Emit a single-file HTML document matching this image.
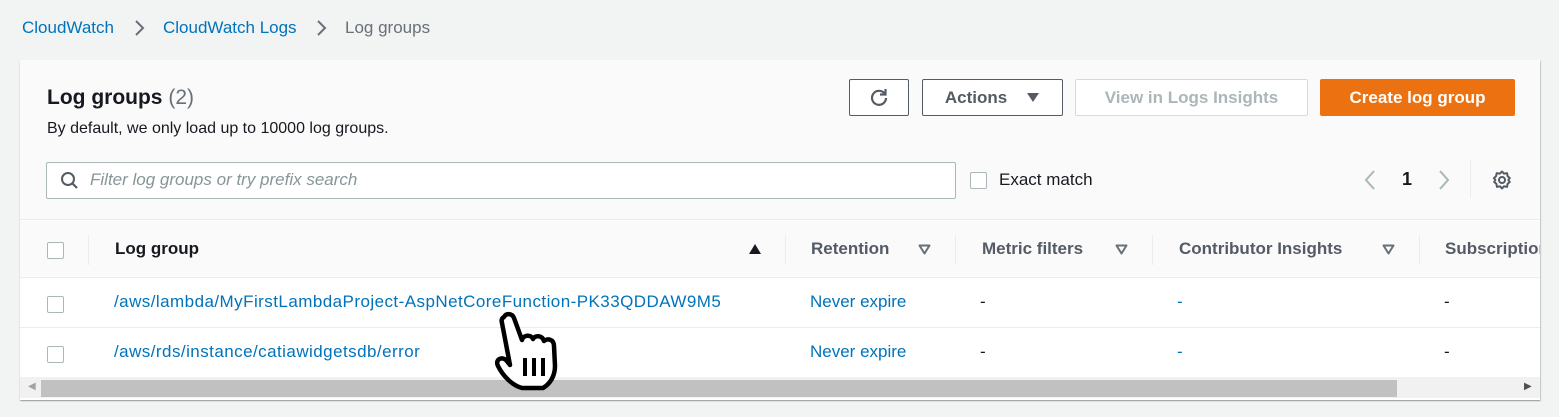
<!DOCTYPE html>
<html><head><meta charset="utf-8"><style>
*{box-sizing:border-box;margin:0;padding:0}
body{width:1559px;height:417px;background:#f2f3f3;font-family:"Liberation Sans",Arial,sans-serif;position:relative;overflow:hidden;color:#16191f}
.a{position:absolute;white-space:nowrap}
.link{color:#0073bb}
.cb{position:absolute;width:17px;height:17px;border:1px solid #aab7b8;border-radius:2px;background:#fff}
.btn{position:absolute;height:37px;border:1px solid #545b64;border-radius:2px;background:#fff;font-weight:bold;font-size:17px;display:flex;align-items:center;justify-content:center;color:#545b64}
.th{font-weight:bold;font-size:17px;color:#545b64}
.sep{position:absolute;width:1px;background:#eaeded}
</style></head><body>
<div class="a link" style="left:22px;top:18px;font-size:17px">CloudWatch</div>
<svg class="a" style="left:134px;top:19px" width="12" height="18" viewBox="0 0 12 18"><path d="M2 2l7 7-7 7" fill="none" stroke="#687078" stroke-width="2"/></svg>
<div class="a link" style="left:163px;top:18px;font-size:17px">CloudWatch Logs</div>
<svg class="a" style="left:316px;top:19px" width="12" height="18" viewBox="0 0 12 18"><path d="M2 2l7 7-7 7" fill="none" stroke="#687078" stroke-width="2"/></svg>
<div class="a" style="left:345px;top:18px;font-size:17px;color:#687078">Log groups</div>

<div class="a" style="left:20px;top:60px;width:1520px;height:340px;background:#fff;box-shadow:0 1px 1px 0 rgba(0,28,36,.3),1px 1px 1px 0 rgba(0,28,36,.15);overflow:hidden">
  <div class="a" style="left:0;top:0;width:1520px;height:160px;background:#fafafa;border-bottom:1px solid #eaeded"></div>
  <div class="a" style="left:27px;top:26px;font-size:21px;font-weight:bold">Log groups <span style="font-weight:normal;color:#687078">(2)</span></div>
  <div class="a" style="left:27px;top:60px;font-size:16px">By default, we only load up to 10000 log groups.</div>
  <div class="btn" style="left:829px;top:19px;width:60px">
    <svg width="22" height="22" viewBox="0 0 22 22"><path d="M16.5 6.5A7 7 0 1 0 18 11" fill="none" stroke="#545b64" stroke-width="2.2"/><path d="M17.5 2v5.5H12" fill="none" stroke="#545b64" stroke-width="2.2"/></svg>
  </div>
  <div class="btn" style="left:902px;top:19px;width:141px">Actions&nbsp;&nbsp;&nbsp;&nbsp;<svg width="14" height="11" viewBox="0 0 14 11"><path d="M1 1h12L7 10z" fill="#545b64"/></svg></div>
  <div class="btn" style="left:1055px;top:19px;width:233px;border-color:#d5dbdb;color:#aab7b8">View in Logs Insights</div>
  <div class="btn" style="left:1300px;top:19px;width:195px;background:#ec7211;border-color:#ec7211;color:#fff">Create log group</div>
  <div class="a" style="left:26px;top:102px;width:910px;height:37px;border:1px solid #aab7b8;border-radius:2px;background:#fff"></div>
  <svg class="a" style="left:40px;top:111px" width="20" height="20" viewBox="0 0 20 20"><circle cx="8" cy="8" r="6" fill="none" stroke="#545b64" stroke-width="2"/><line x1="12.5" y1="12.5" x2="17" y2="17" stroke="#545b64" stroke-width="2.2"/></svg>
  <div class="a" style="left:70px;top:110px;font-size:17px;font-style:italic;color:#879596">Filter log groups or try prefix search</div>
  <div class="cb" style="left:950px;top:112px"></div>
  <div class="a" style="left:979px;top:110px;font-size:17px">Exact match</div>
  <svg class="a" style="left:1343px;top:109px" width="14" height="22" viewBox="0 0 14 22"><path d="M11 2L3 11l8 9" fill="none" stroke="#aab7b8" stroke-width="2"/></svg>
  <div class="a" style="left:1382px;top:109px;font-size:18px;font-weight:bold">1</div>
  <svg class="a" style="left:1417px;top:109px" width="14" height="22" viewBox="0 0 14 22"><path d="M3 2l8 9-8 9" fill="none" stroke="#aab7b8" stroke-width="2"/></svg>
  <div class="sep" style="left:1450px;top:100px;height:38px"></div>
  <svg class="a" style="left:1471px;top:109px" width="22" height="22" viewBox="0 0 22 22"><circle cx="11" cy="11" r="3" fill="none" stroke="#545b64" stroke-width="2"/><path d="M11 2.5l2 2.2 3-.6.6 3 2.2 2-1.5 1.9 1.5 1.9-2.2 2-.6 3-3-.6-2 2.2-2-2.2-3 .6-.6-3-2.2-2L4.4 11 2.9 9.1l2.2-2 .6-3 3 .6z" fill="none" stroke="#545b64" stroke-width="2" stroke-linejoin="round"/></svg>

  <div class="a" style="left:0;top:161px;width:1520px;height:57px;background:#fafafa;border-bottom:1px solid #eaeded"></div>
  <div class="cb" style="left:27px;top:182px"></div>
  <div class="sep" style="left:68px;top:175px;height:30px"></div>
  <div class="a th" style="left:95px;top:179px;color:#16191f">Log group</div>
  <svg class="a" style="left:728px;top:183px" width="14" height="12" viewBox="0 0 14 12"><path d="M1 11h12L7 1z" fill="#16191f"/></svg>
  <div class="sep" style="left:765px;top:175px;height:30px"></div>
  <div class="a th" style="left:791px;top:179px">Retention</div>
  <svg class="a" style="left:898px;top:184px" width="13" height="11" viewBox="0 0 13 11"><path d="M1.5 1.5h10L6.5 9.5z" fill="none" stroke="#687078" stroke-width="2" stroke-linejoin="round"/></svg>
  <div class="sep" style="left:935px;top:175px;height:30px"></div>
  <div class="a th" style="left:962px;top:179px">Metric filters</div>
  <svg class="a" style="left:1095px;top:184px" width="13" height="11" viewBox="0 0 13 11"><path d="M1.5 1.5h10L6.5 9.5z" fill="none" stroke="#687078" stroke-width="2" stroke-linejoin="round"/></svg>
  <div class="sep" style="left:1132px;top:175px;height:30px"></div>
  <div class="a th" style="left:1159px;top:179px">Contributor Insights</div>
  <svg class="a" style="left:1362px;top:184px" width="13" height="11" viewBox="0 0 13 11"><path d="M1.5 1.5h10L6.5 9.5z" fill="none" stroke="#687078" stroke-width="2" stroke-linejoin="round"/></svg>
  <div class="sep" style="left:1399px;top:175px;height:30px"></div>
  <div class="a th" style="left:1425px;top:179px">Subscriptions</div>

  <div class="a" style="left:0;top:267px;width:1520px;height:1px;background:#eaeded"></div>
  <div class="cb" style="left:27px;top:236px"></div>
  <div class="a link" style="left:94px;top:232px;font-size:17px;letter-spacing:0.45px">/aws/lambda/MyFirstLambdaProject-AspNetCoreFunction-PK33QDDAW9M5</div>
  <div class="a link" style="left:790px;top:232px;font-size:17px">Never expire</div>
  <div class="a" style="left:960px;top:232px;font-size:17px">-</div>
  <div class="a link" style="left:1157px;top:232px;font-size:17px">-</div>
  <div class="a" style="left:1424px;top:232px;font-size:17px">-</div>
  <div class="cb" style="left:27px;top:286px"></div>
  <div class="a link" style="left:94px;top:282px;font-size:17px;letter-spacing:0.45px">/aws/rds/instance/catiawidgetsdb/error</div>
  <div class="a link" style="left:790px;top:282px;font-size:17px">Never expire</div>
  <div class="a" style="left:960px;top:282px;font-size:17px">-</div>
  <div class="a link" style="left:1157px;top:282px;font-size:17px">-</div>
  <div class="a" style="left:1424px;top:282px;font-size:17px">-</div>

  <div class="a" style="left:0;top:317px;width:1520px;height:21px;background:#f1f1f1"></div>
  <div class="a" style="left:8px;top:321px;font-size:10px;color:#a3a3a3">&#x25C0;</div>
  <div class="a" style="left:21px;top:320px;width:1356px;height:17px;background:#c1c1c1"></div>
  <div class="a" style="left:1504px;top:321px;font-size:10px;color:#505050">&#x25B6;</div>
</div>

<svg class="a" style="left:490px;top:308px" width="84" height="86" viewBox="0 0 84 86">
<path d="M14 9c2-4 8-4 10 1l8 22c1-5 9-6 11-1 2-4 9-4 11 2 3-3 10-2 10 5l1 20c0 10-5 18-12 22H32C24 78 14 70 8 58c-3-6 3-10 8-6l4 5L12 15c-1-3 0-5 2-6z" fill="#fff" stroke="#000" stroke-width="4.5" stroke-linejoin="round"/>
<line x1="35" y1="50" x2="35" y2="68" stroke="#000" stroke-width="4"/>
<line x1="44" y1="50" x2="44" y2="68" stroke="#000" stroke-width="4"/>
<line x1="53" y1="50" x2="53" y2="68" stroke="#000" stroke-width="4"/>
</svg>
</body></html>
